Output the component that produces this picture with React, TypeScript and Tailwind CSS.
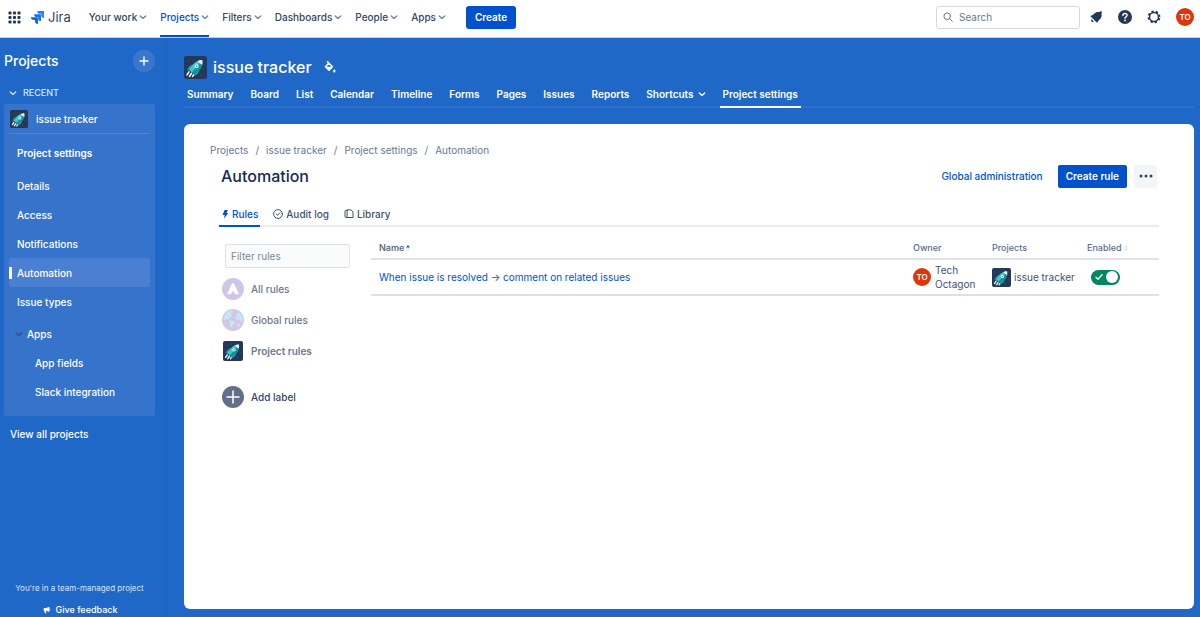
import React from 'react';

const navItems = ['Your work', 'Projects', 'Filters', 'Dashboards', 'People', 'Apps'];

const projectTabs = [
  'Summary', 'Board', 'List', 'Calendar', 'Timeline', 'Forms',
  'Pages', 'Issues', 'Reports', 'Shortcuts', 'Project settings',
];

const crumbs = ['Projects', 'issue tracker', 'Project settings', 'Automation'];

const settingsLinks = ['Details', 'Access', 'Notifications', 'Automation', 'Issue types'];

const Chevron: React.FC<{ className?: string }> = ({ className }) => (
  <svg viewBox="0 0 8 8" className={`h-2 w-2 shrink-0 ${className ?? ''}`} fill="none" stroke="currentColor" strokeWidth="1.3" strokeLinecap="round" strokeLinejoin="round">
    <path d="M1.3 3 4 5.4 6.7 3" />
  </svg>
);

const Rocket: React.FC<{ className: string }> = ({ className }) => (
  <svg viewBox="0 0 24 24" className={`shrink-0 ${className}`}>
    <rect width="24" height="24" rx="2.5" fill="#253858" />
    <g fill="#5f7494">
      <circle cx="5" cy="5" r="0.5" />
      <circle cx="10" cy="3.5" r="0.4" />
      <circle cx="20.5" cy="14" r="0.5" />
      <circle cx="17" cy="20" r="0.5" />
      <circle cx="3" cy="10" r="0.4" />
    </g>
    <path d="M5.200 16.600 3.200 19.600M7.800 18 5.800 21.200M10.200 19.400 9 21.200" stroke="#eef6fa" strokeWidth="1.700" strokeLinecap="round" />
    <path d="M9 8.800C6.600 9.400 4 11.800 3 15.400l5-1.600zM16 15c-.4 2.600-2.600 4.900-5.800 5.800l.8-4.600z" fill="#1d97ab" />
    <path d="M19 4.200c.9 4.200-.2 7.900-3.200 10.900L11 19.200 5.200 14.400l4-5.400C12 5.900 15.200 4.300 19 4.200z" fill="#12939f" />
    <path d="M19 4.200C15.200 4.300 12 5.900 9.200 9l-4 5.400 3.200 2.600z" fill="#46c5cb" />
    <path d="M19 4.200c.4 1.700.4 3.300.1 4.800C17.300 8.500 15.300 6.800 14.500 5.200c1.400-.6 2.900-.9 4.500-1z" fill="#e6f2f7" />
    <circle cx="13.200" cy="10.600" r="2" fill="#f0f8fb" />
    <circle cx="13.200" cy="10.600" r="0.900" fill="#4a86ab" />
  </svg>
);

const Avatar: React.FC = () => (
  <span className="flex h-[18px] w-[18px] shrink-0 items-center justify-center rounded-full bg-[#de350b] text-[8px] font-semibold text-white">
    TO
  </span>
);

const TopBar: React.FC = () => (
  <header className="flex h-[38px] shrink-0 items-center border-b border-[#c3cfe0] bg-white pr-1.5 pb-[3px] pl-2 text-[#344563]">
    <button aria-label="Switch to" className="mr-2.5">
      <svg viewBox="0 0 13 13" className="h-[13px] w-[13px]" fill="#253858">
        {[0.5, 5, 9.5].map((y) => [0.5, 5, 9.5].map((x) => <rect key={`${x}-${y}`} x={x} y={y} width="3" height="3" rx="0.8" />))}
      </svg>
    </button>
    <a href="#" className="mr-[18px] flex items-center gap-1">
      <svg viewBox="0 0 24 24" className="h-[13px] w-[13px]">
        <path d="M23.300 0H11.500a5.300 5.300 0 0 0 5.300 5.300H19v2.100a5.300 5.300 0 0 0 5.300 5.300V1a1 1 0 0 0-1-1z" fill="#2684ff" />
        <path d="M17.500 5.800H5.700a5.300 5.300 0 0 0 5.300 5.300h2.200v2.100a5.300 5.300 0 0 0 5.300 5.300V6.800a1 1 0 0 0-1-1z" fill="#1a72f0" />
        <path d="M11.700 11.500H-.1a5.300 5.300 0 0 0 5.300 5.300h2.200V19a5.300 5.300 0 0 0 5.300 5.200V12.500a1 1 0 0 0-1-1z" fill="#0f62e0" />
      </svg>
      <span className="text-[13px] leading-4 font-normal">Jira</span>
    </a>
    <nav className="-mb-[3px] flex h-[37px] gap-[13px]">
      {navItems.map((item) => (
        <button
          key={item}
          className={`flex h-full items-center gap-0.5 border-b-2 pb-px font-medium ${
            item === 'Projects' ? 'border-[#0052cc] text-[#0052cc]' : 'border-transparent'
          }`}
        >
          {item}
          <Chevron className="opacity-70" />
        </button>
      ))}
    </nav>
    <button className="ml-5 h-[23px] rounded-[3px] bg-[#0052cc] px-[9px] font-semibold text-white">Create</button>
    <label className="mr-[9px] ml-auto flex h-[23px] w-36 items-center gap-1.5 rounded-[3px] border border-[#d5d9e0] px-1.5 text-[#6b778c]">
      <svg viewBox="0 0 10 10" className="h-2.5 w-2.5 shrink-0" fill="none" stroke="currentColor" strokeWidth="1" strokeLinecap="round">
        <circle cx="4.200" cy="4.200" r="3.300" />
        <path d="m6.700 6.700 2.600 2.600" />
      </svg>
      <input aria-label="Search" placeholder="Search" className="w-full min-w-0 outline-none placeholder:text-[#6b778c]" />
    </label>
    <div className="flex items-center gap-[15px]">
      <button aria-label="Notifications">
        <svg viewBox="0 0 14 14" className="h-3.5 w-3.5" fill="#253858">
          <path d="M12.600 1.400c.7.800.3 1.600-.2 2.200.7 2.100.1 4-1.200 5.300L9 11.200c-.2.800-.5 1.300-1 1.300-.3 0-.6-.2-.8-.4L1.900 6.800c-.5-.5-.4-1 .1-1.300l1.500-.3 1.600-1.500c1.500-1.500 3.200-2 5.200-1.600.7-.7 1.600-1.300 2.300-.7zM2.600 9.300l2.200 2.200c-.8.800-1.700.7-2.300.1-.6-.7-.6-1.600.1-2.300z" />
        </svg>
      </button>
      <button aria-label="Help">
        <svg viewBox="0 0 14 14" className="h-3.5 w-3.5">
          <circle cx="7" cy="7" r="7" fill="#253858" />
          <path d="M4.900 5.500C4.900 4.200 5.800 3.500 7 3.500s2.100.8 2.100 1.800C9.100 6.800 7 6.800 7 8.200" fill="none" stroke="#fff" strokeWidth="1.400" strokeLinecap="round" />
          <circle cx="7" cy="10.400" r="0.900" fill="#fff" />
        </svg>
      </button>
      <button aria-label="Settings">
        <svg viewBox="0 0 14 14" className="h-3.5 w-3.5" fill="none" stroke="#253858">
          <circle cx="7" cy="7" r="4.500" strokeWidth="1.500" />
          <circle cx="7" cy="7" r="5.500" strokeWidth="1.900" strokeDasharray="2.200 2.120" strokeDashoffset="3.200" />
        </svg>
      </button>
      <button aria-label="Your profile">
        <Avatar />
      </button>
    </div>
  </header>
);

const Sidebar: React.FC = () => (
  <aside className="flex w-[167px] shrink-0 flex-col border-r-2 border-[#1e64c0] pt-3 pr-2.5 pl-1 font-medium text-white">
    <div className="flex h-[22px] items-center justify-between">
      <h2 className="text-[14px] font-medium">Projects</h2>
      <button aria-label="Create project" className="flex h-[22px] w-[22px] items-center justify-center rounded-full bg-[#3a76cd]">
        <svg viewBox="0 0 10 10" className="h-2.5 w-2.5" stroke="#fff" strokeWidth="1.400" strokeLinecap="round">
          <path d="M5 1v8M1 5h8" />
        </svg>
      </button>
    </div>
    <button className="mt-[11px] flex h-5 items-center gap-1.5 pl-[5px] text-[9px] text-[#d6e4f8]">
      <Chevron />
      RECENT
    </button>
    <nav className="mt-px rounded-[3px] bg-[#3673cb] px-[5px] pb-[10px]">
      <a href="#" className="flex h-[30px] items-center gap-2 border-b border-[#4d85d4] pl-px">
        <Rocket className="h-[18px] w-[18px]" />
        issue tracker
      </a>
      <h3 className="mt-[5px] mb-1 flex h-[28px] items-center pl-2 font-semibold">Project settings</h3>
      {settingsLinks.map((item) => (
        <a
          key={item}
          href="#"
          className={`flex h-[29px] items-center rounded-[3px] ${item === 'Automation' ? 'bg-[#4a7fd2]' : ''}`}
        >
          <span className={`mr-[5px] h-3 w-[3px] ${item === 'Automation' ? 'bg-white' : ''}`} />
          {item}
        </a>
      ))}
      <button className="mt-[3px] flex h-[29px] items-center gap-1 pl-1.5">
        <Chevron className="text-[#344f80]" />
        Apps
      </button>
      <a href="#" className="flex h-[29px] items-center pl-[26px]">App fields</a>
      <a href="#" className="flex h-[29px] items-center pl-[26px]">Slack integration</a>
    </nav>
    <a href="#" className="mt-[10px] px-1.5">View all projects</a>
    <div className="mt-auto flex flex-col items-center gap-2">
      <p className="text-[8px] leading-[14px] font-normal text-[#d6e4f8]">You're in a team-managed project</p>
      <button className="flex items-center gap-1 text-[9px] leading-[14px] font-medium">
        <svg viewBox="0 0 10 10" className="h-2 w-2.5" fill="#fff">
          <path d="M8 .8 4 2.400H1.600C.4 2.400.4 6 1.600 6l.8 3.200h1.800L3.700 6H4l4 1.600zM8.600 3c1 .3 1 2 0 2.300z" />
        </svg>
        Give feedback
      </button>
    </div>
  </aside>
);

const ProjectHeader: React.FC = () => (
  <div className="text-white">
    <div className="flex items-center gap-1.5">
      <Rocket className="h-[23px] w-[23px]" />
      <h1 className="text-[16px] leading-6 font-medium">issue tracker</h1>
      <button aria-label="Change background" className="ml-1.5">
        <svg viewBox="0 0 12 12" className="h-3 w-3">
          <path d="M3.500.8 8.400 5.700 5 9.200 1.400 5.700l3.300-3.400" fill="none" stroke="#fff" strokeWidth="1.500" strokeLinejoin="round" strokeLinecap="round" />
          <path d="M1.400 5.700h7L5 9.300z" fill="#fff" />
          <path d="M10.300 8c.7 1 1.200 1.600 1.200 2.300a1.200 1.200 0 0 1-2.400 0c0-.7.500-1.300 1.200-2.300z" fill="#fff" />
        </svg>
      </button>
    </div>
    <nav className="mt-[3px] flex h-[26px] gap-[11px] border-b-2 border-[#2e71cc] font-semibold">
      {projectTabs.map((tab) => (
        <a
          key={tab}
          href="#"
          className={`-mb-0.5 flex items-center gap-1 border-b-2 px-[3px] whitespace-nowrap ${
            tab === 'Project settings' ? 'border-white' : 'border-transparent'
          }`}
        >
          {tab}
          {tab === 'Shortcuts' && <Chevron />}
        </a>
      ))}
    </nav>
  </div>
);

const AutomationTabs: React.FC = () => (
  <div className="ml-[9px] flex h-6 gap-[13px] border-b-2 border-[#ebecf0] font-medium text-[#42526e]" role="tablist">
    <button role="tab" aria-selected="true" className="-mb-0.5 flex items-center gap-[3px] border-b-2 border-[#0052cc] px-0.5 text-[#0052cc]">
      <svg viewBox="0 0 8 10" className="h-2.5 w-2" fill="currentColor">
        <path d="M3.600 1h3.200L5.600 3.900h1.700L3 9.400l.6-3.500H1.500z" />
      </svg>
      Rules
    </button>
    <button role="tab" aria-selected="false" className="flex items-center gap-[3px]">
      <svg viewBox="0 0 10 10" className="h-2.5 w-2.5" fill="none" stroke="currentColor" strokeWidth="1" strokeLinecap="round" strokeLinejoin="round">
        <circle cx="5" cy="5" r="4.400" />
        <path d="m3.200 5 1.400 1.300 2.300-2.500" />
      </svg>
      Audit log
    </button>
    <button role="tab" aria-selected="false" className="ml-0.5 flex items-center gap-[3px]">
      <svg viewBox="0 0 10 10" className="h-2.5 w-2.5" fill="none" stroke="currentColor" strokeWidth="1" strokeLinecap="round" strokeLinejoin="round">
        <path d="M3.500.8h3.300L9 3v5.500H3.500zM3.300 1.500H1.800c-.5 0-.8.300-.8.800v5.400c0 .5.300.8.800.8h1.500" />
      </svg>
      Library
    </button>
  </div>
);

const RuleFilters: React.FC = () => (
  <div className="w-[125px] shrink-0 text-[#6b778c]">
    <input
      aria-label="Filter rules"
      placeholder="Filter rules"
      className="h-6 w-full rounded-[2px] border border-[#dfe1e6] bg-[#fafbfc] px-[5px] outline-none placeholder:text-[#7a869a]"
    />
    <div className="mt-[5px] -ml-[3px] font-medium">
      <button className="flex h-[31px] items-center gap-[7px]">
        <svg viewBox="0 0 22 22" className="h-[22px] w-[22px]">
          <circle cx="11" cy="11" r="11" fill="#cdc6e8" />
          <path d="M10.100 5.600 5 16.200h4l2-3.600 2 3.600h4L11.900 5.600c-.4-.7-1.400-.7-1.800 0z" fill="#fff" />
        </svg>
        All rules
      </button>
      <button className="flex h-[31px] items-center gap-[7px]">
        <svg viewBox="0 0 22 22" className="h-[22px] w-[22px]">
          <circle cx="11" cy="11" r="11" fill="#d5c6e8" />
          <path d="M2.600 6.200C4.300 3.200 7 1.700 9.600 1.300l1.200 1.600-1.600 1.900.9 1.900-2.300 1.500-1.300 2.200-2.200-.4-1.900 1-1.200-.7c.1-1.500.6-2.900 1.400-4.100zM8 11.200l3.200.6 1.700 2.300-2 1.900-1 3.600-2-2.400.2-3.200-1.100-1.700zM14.200 5l2.700-1.600c2.200 1.600 3.700 4 3.900 6.900l-1.600 2.900-1.500-2.700-2.600.5-2.100-2.600 1.800-1.400zM16 14.800l2.600.6-2.300 3-1.400-1.300z" fill="#c5e6f2" />
        </svg>
        Global rules
      </button>
      <button className="flex h-[31px] items-center gap-[7px] font-semibold">
        <span className="flex w-[22px] justify-center">
          <Rocket className="h-5 w-5" />
        </span>
        Project rules
      </button>
      <button className="mt-[15px] flex h-[31px] items-center gap-[7px] text-[#344563]">
        <svg viewBox="0 0 22 22" className="h-[22px] w-[22px]">
          <circle cx="11" cy="11" r="11" fill="#626f86" />
          <path d="M11 5v12M5 11h12" stroke="#fff" strokeWidth="1.500" strokeLinecap="round" />
        </svg>
        Add label
      </button>
    </div>
  </div>
);

const RulesTable: React.FC = () => (
  <table className="w-full table-fixed border-collapse text-left">
    <thead>
      <tr className="h-[22px] border-b-2 border-[#dfe1e6] text-[9px] text-[#5e6c84]">
        <th className="pl-2 font-semibold">
          <span className="flex items-center gap-0.5">
            Name
            <svg viewBox="0 0 4 6" className="h-1.5 w-1">
              <path d="M0 2.500 2 0l2 2.500z" fill="#42526e" />
              <path d="M0 3.500h4L2 6z" fill="#dfe1e6" />
            </svg>
          </span>
        </th>
        <th className="w-[79px] font-medium">Owner</th>
        <th className="w-[95px] font-medium">Projects</th>
        <th className="w-[72px] font-medium">
          <span className="flex items-center gap-0.5">
            Enabled
            <svg viewBox="0 0 4 6" className="h-1.5 w-1" fill="#dfe1e6">
              <path d="M0 2.500 2 0l2 2.500zM0 3.500h4L2 6z" />
            </svg>
          </span>
        </th>
      </tr>
    </thead>
    <tbody>
      <tr className="h-9 border-b-2 border-[#dfe1e6] text-[#42526e]">
        <td className="pl-2">
          <a href="#" className="text-[#0052cc]">When issue is resolved → comment on related issues</a>
        </td>
        <td>
          <span className="flex items-center gap-1 leading-[14px]">
            <Avatar />
            <span>Tech Octagon</span>
          </span>
        </td>
        <td>
          <span className="flex items-center gap-[3px] whitespace-nowrap">
            <Rocket className="h-[19px] w-[19px]" />
            issue tracker
          </span>
        </td>
        <td className="pl-1">
          <label className="flex h-[15px] w-[29px] cursor-pointer items-center justify-between rounded-full bg-[#00875a] pr-0.5 pl-1">
            <input type="checkbox" role="switch" defaultChecked aria-label="Rule enabled" className="sr-only" />
            <svg viewBox="0 0 8 8" className="h-2 w-2" fill="none" stroke="#fff" strokeWidth="1.400" strokeLinecap="round" strokeLinejoin="round">
              <path d="m1 4.200 2 2 4-4.400" />
            </svg>
            <span className="h-3 w-3 rounded-full bg-white" />
          </label>
        </td>
      </tr>
    </tbody>
  </table>
);

export default function App() {
  return (
    <div className="flex min-h-screen flex-col bg-[#2068c8] font-[Inter,sans-serif] text-[10px] leading-4">
      <TopBar />
      <div className="flex flex-1">
        <Sidebar />
        <div className="flex min-w-0 flex-1 flex-col pt-[17px] pr-1.5 pb-2 pl-[17px]">
          <ProjectHeader />
          <main className="mt-4 flex-1 rounded-md bg-white pt-[18px] pr-[35px] pb-6 pl-[26px]">
            <nav aria-label="Breadcrumb" className="flex gap-[7px] text-[#6b778c]">
              {crumbs.map((crumb, i) => (
                <React.Fragment key={crumb}>
                  {i > 0 && <span>/</span>}
                  <a href="#">{crumb}</a>
                </React.Fragment>
              ))}
            </nav>
            <div className="mt-1.5 flex items-center pl-[11px] text-[#172b4d]">
              <h2 className="flex-1 text-[16px] leading-6 font-medium">Automation</h2>
              <a href="#" className="mr-[15px] font-medium text-[#0052cc]">Global administration</a>
              <button className="mr-[7px] h-[23px] rounded-[2px] bg-[#0052cc] px-2 font-semibold text-white">Create rule</button>
              <button aria-label="More actions" className="mr-0.5 flex h-[23px] w-[23px] items-center justify-center rounded-[2px] bg-[#f4f5f7]">
                <svg viewBox="0 0 14 4" className="h-1 w-3.5" fill="#344563">
                  <circle cx="2" cy="2" r="1.500" />
                  <circle cx="7" cy="2" r="1.500" />
                  <circle cx="12" cy="2" r="1.500" />
                </svg>
              </button>
            </div>
            <div className="mt-[15px]">
              <AutomationTabs />
            </div>
            <div className="mt-[17px] flex gap-[21px] pl-[15px]">
              <RuleFilters />
              <div className="-mt-[7px] min-w-0 flex-1">
                <RulesTable />
              </div>
            </div>
          </main>
        </div>
      </div>
    </div>
  );
}
